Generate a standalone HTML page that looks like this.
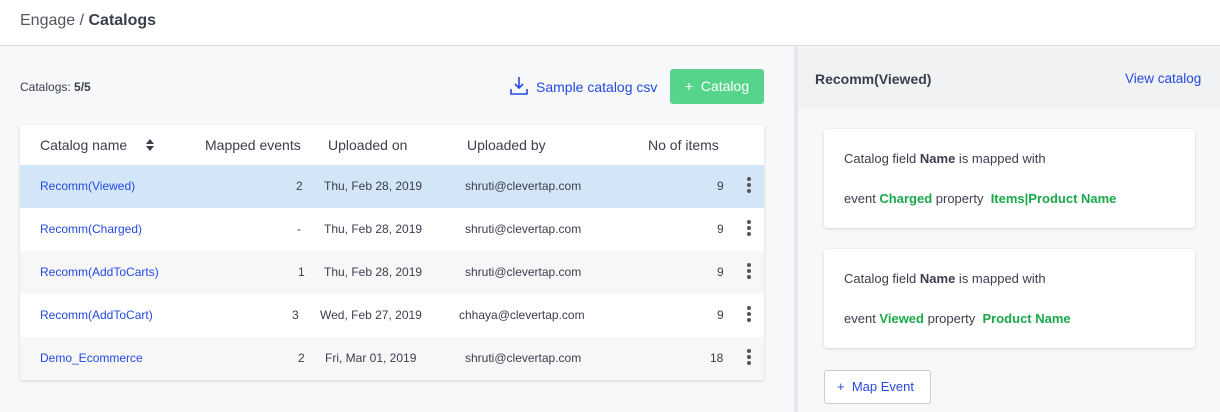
<!DOCTYPE html>
<html><head><meta charset="utf-8"><style>
*{box-sizing:border-box;margin:0;padding:0}
body{width:1220px;height:412px;overflow:hidden;background:#f7f8fa;font-family:"Liberation Sans",sans-serif;color:#3b3e4d;position:relative}
.hdr{position:absolute;left:0;top:0;width:1220px;height:46px;background:#fff;border-bottom:1px solid #d8d9dd}
.hdr span{position:absolute;left:20px;top:12px;font-size:16px;color:#55575f}
.hdr b{color:#3b3e4d}
.abs{position:absolute}
.tbl{position:absolute;left:20px;top:125px;width:744px;background:#fff;box-shadow:0 1px 3px rgba(0,0,0,.15)}
.row{position:relative;height:43px;font-size:12px}
.row div{position:absolute;top:14px}
.th{height:40px;font-size:14px;color:#3b3e4d}
.th div{top:12px}
.blue{color:#2549e0}
.green{color:#1aa84a;font-weight:bold}
.dots{position:absolute;left:727px;top:12px!important;width:4px}
.dots i{display:block;width:4px;height:4px;border-radius:2px;background:#555;margin-bottom:2px}
.card{position:absolute;left:824px;width:371px;height:99px;background:#fff;border-radius:3px;box-shadow:0 1px 3px rgba(0,0,0,.15);font-size:13px}
.card p{position:absolute;left:20px}
</style></head><body>
<div class="hdr"><span>Engage / <b>Catalogs</b></span></div>
<div class="abs" style="left:20px;top:80px;font-size:12px">Catalogs: <b>5/5</b></div>
<svg class="abs" style="left:509px;top:76px" width="20" height="20" viewBox="0 0 20 20"><path d="M10 1v11M6 8l4 4 4-4M2 13v5h16v-5" fill="none" stroke="#2549e0" stroke-width="1.6"/></svg>
<div class="abs blue" style="left:536px;top:79px;font-size:14px">Sample catalog csv</div>
<div class="abs" style="left:670px;top:69px;width:94px;height:35px;background:#57d48b;border-radius:3px;color:#fff;font-size:14px;text-align:center;line-height:35px">+ &nbsp;Catalog</div>
<div class="tbl">
<div class="row th"><div style="left:20px">Catalog name</div><svg style="position:absolute;left:125px;top:13px" width="10" height="14" viewBox="0 0 10 14"><path d="M5 1l4 5H1zM5 13l4-5H1z" fill="#3b3e4d"/></svg><div style="left:185px">Mapped events</div><div style="left:308px">Uploaded on</div><div style="left:447px">Uploaded by</div><div style="left:628px">No of items</div></div>
<div class="row" style="background:#d3e6f8"><div class="blue" style="left:20px">Recomm(Viewed)</div><div style="left:276px">2</div><div style="left:304px">Thu, Feb 28, 2019</div><div style="left:445px">shruti@clevertap.com</div><div style="left:697px">9</div><div class="dots"><i></i><i></i><i></i></div></div>
<div class="row"><div class="blue" style="left:20px">Recomm(Charged)</div><div style="left:277px">-</div><div style="left:304px">Thu, Feb 28, 2019</div><div style="left:445px">shruti@clevertap.com</div><div style="left:697px">9</div><div class="dots"><i></i><i></i><i></i></div></div>
<div class="row" style="background:#f7f7f8"><div class="blue" style="left:20px">Recomm(AddToCarts)</div><div style="left:278px">1</div><div style="left:304px">Thu, Feb 28, 2019</div><div style="left:445px">shruti@clevertap.com</div><div style="left:697px">9</div><div class="dots"><i></i><i></i><i></i></div></div>
<div class="row"><div class="blue" style="left:20px">Recomm(AddToCart)</div><div style="left:272px">3</div><div style="left:300px">Wed, Feb 27, 2019</div><div style="left:439px">chhaya@clevertap.com</div><div style="left:697px">9</div><div class="dots"><i></i><i></i><i></i></div></div>
<div class="row" style="background:#f7f7f8"><div class="blue" style="left:20px">Demo_Ecommerce</div><div style="left:278px">2</div><div style="left:305px">Fri, Mar 01, 2019</div><div style="left:445px">shruti@clevertap.com</div><div style="left:690px">18</div><div class="dots"><i></i><i></i><i></i></div></div>
</div>
<div class="abs" style="left:794px;top:47px;width:4px;height:365px;background:#e6e7ea"></div>
<div class="abs" style="left:798px;top:47px;width:422px;height:62px;background:#f1f2f4"></div>
<div class="abs" style="left:815px;top:71px;font-size:14px;font-weight:bold;color:#3b3e4d">Recomm(Viewed)</div>
<div class="abs blue" style="left:1125px;top:71px;font-size:13.5px">View catalog</div>
<div class="card" style="top:129px"><p style="top:22px">Catalog field <b>Name</b> is mapped with</p><p style="top:62px">event <span class="green">Charged</span> property &nbsp;<span class="green">Items|Product Name</span></p></div>
<div class="card" style="top:249px"><p style="top:22px">Catalog field <b>Name</b> is mapped with</p><p style="top:62px">event <span class="green">Viewed</span> property &nbsp;<span class="green">Product Name</span></p></div>
<div class="abs blue" style="left:824px;top:370px;width:107px;height:34px;background:#fff;border:1px solid #ccc;border-radius:3px;font-size:13px;line-height:32px;padding-left:12px">+ &nbsp;Map Event</div>
</body></html>
